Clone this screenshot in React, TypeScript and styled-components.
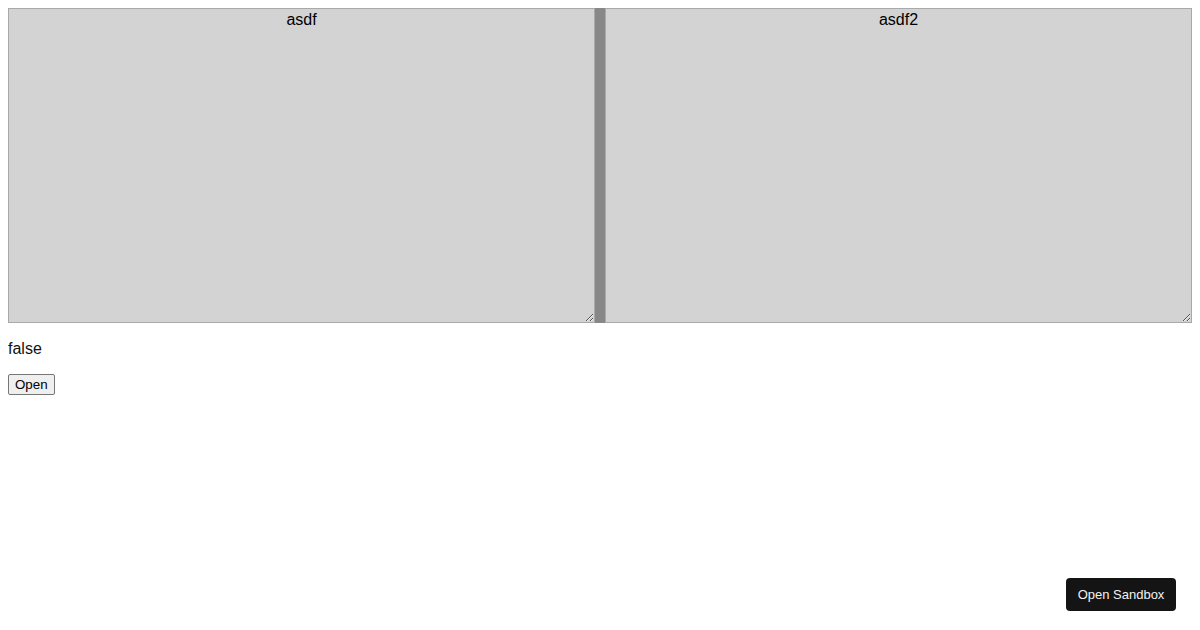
import {useState} from 'react';
import styled, {createGlobalStyle} from 'styled-components';

const GlobalStyle = createGlobalStyle`
  body {
    margin: 8px;
    font-family: 'Liberation Sans', Arial, sans-serif;
    font-size: 16px;
    color: #000;
    background: #fff;
  }
`;

const SplitPane = styled.div`
  display: flex;
  width: 100%;
  height: 315px;
`;

const Pane = styled.textarea`
  flex: 1;
  min-width: 0;
  box-sizing: border-box;
  height: 100%;
  margin: 0;
  padding: 2px;
  border: 1px solid #a9a9a9;
  background: lightgray;
  text-align: center;
  font-family: 'Liberation Sans', Arial, sans-serif;
  font-size: 16px;
  color: #000;
  resize: both;
`;

const Divider = styled.div`
  flex: 0 0 10px;
  background: #888;
  cursor: col-resize;
`;

const Status = styled.p`
  margin: 17px 0 15px;
  line-height: 18px;
  color: #111;
`;

const OpenButton = styled.button`
  font-family: 'Liberation Sans', Arial, sans-serif;
  font-size: 13.33px;
  padding: 1px 6px;
  height: 21px;
  margin-top: 1px;
  border: 1px solid #767676;
  border-radius: 2px;
  background: #efefef;
  color: #000;
`;

const SandboxButton = styled.button`
  position: fixed;
  right: 24px;
  bottom: 19px;
  width: 110px;
  height: 33px;
  border: none;
  border-radius: 4px;
  background: #141414;
  color: #f2f2f2;
  font-family: 'Liberation Sans', Arial, sans-serif;
  font-size: 13px;
  cursor: pointer;
`;

const App = () => {
  const [open, setOpen] = useState(false);
  const [left, setLeft] = useState('asdf');
  const [right, setRight] = useState('asdf2');

  return (
    <>
      <GlobalStyle />
      <SplitPane>
        <Pane value={left} onChange={(e) => setLeft(e.target.value)} />
        <Divider />
        <Pane value={right} onChange={(e) => setRight(e.target.value)} />
      </SplitPane>
      <Status>{String(open)}</Status>
      <OpenButton onClick={() => setOpen(true)}>Open</OpenButton>
      <SandboxButton>Open Sandbox</SandboxButton>
    </>
  );
};

export default App;
